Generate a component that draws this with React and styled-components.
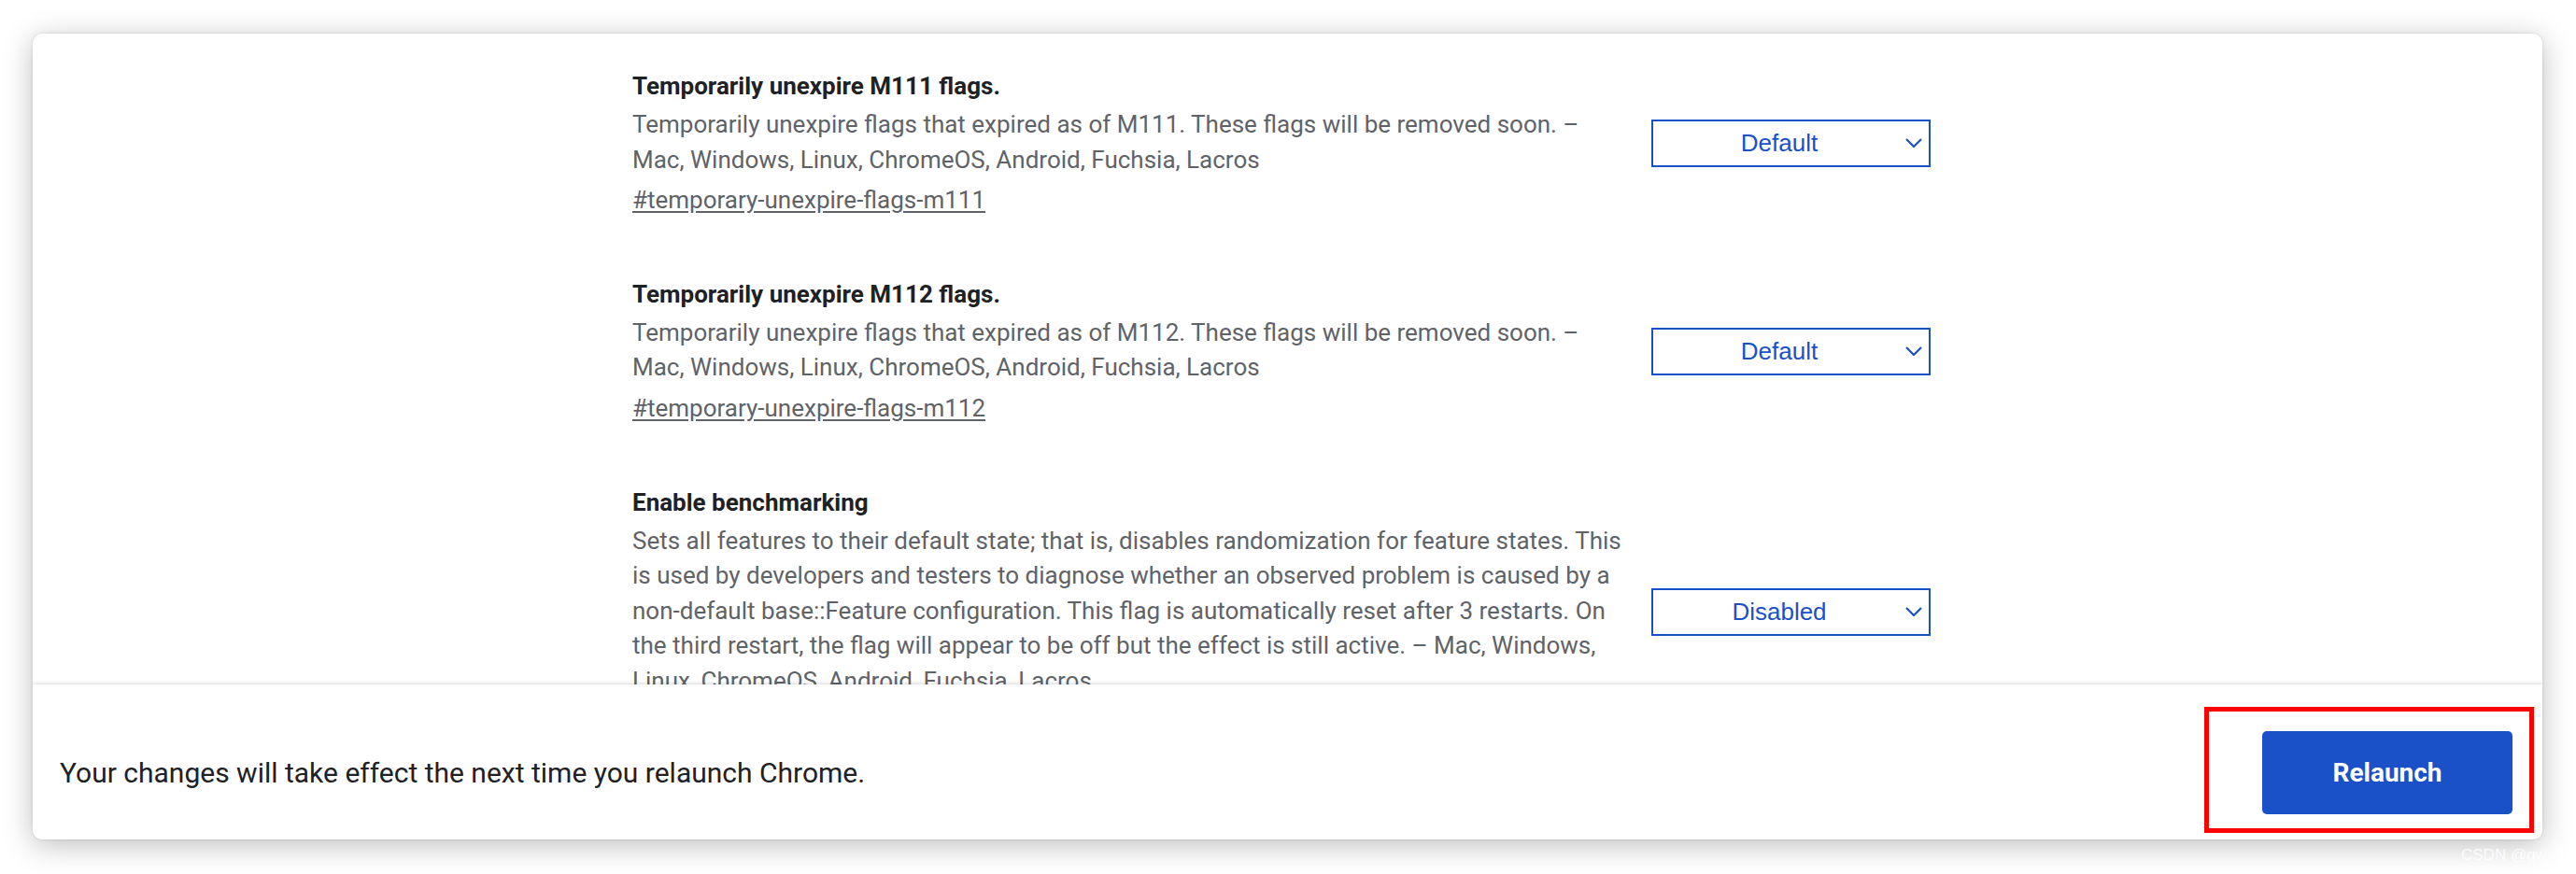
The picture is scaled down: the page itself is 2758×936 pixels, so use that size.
import React from 'react';
import styled, {createGlobalStyle} from 'styled-components';

const GlobalStyle = createGlobalStyle`
  html, body {
    margin: 0;
    padding: 0;
    background: #ffffff;
  }

  body {
    font-family: Roboto, "Noto Sans", "Liberation Sans", sans-serif;
    -webkit-font-smoothing: antialiased;
  }
`;

const flags = [
  {
    name: 'Temporarily unexpire M111 flags.',
    description:
      'Temporarily unexpire flags that expired as of M111. These flags will be removed soon. – Mac, Windows, Linux, ChromeOS, Android, Fuchsia, Lacros',
    link: '#temporary-unexpire-flags-m111',
    value: 'Default',
  },
  {
    name: 'Temporarily unexpire M112 flags.',
    description:
      'Temporarily unexpire flags that expired as of M112. These flags will be removed soon. – Mac, Windows, Linux, ChromeOS, Android, Fuchsia, Lacros',
    link: '#temporary-unexpire-flags-m112',
    value: 'Default',
  },
  {
    name: 'Enable benchmarking',
    description:
      'Sets all features to their default state; that is, disables randomization for feature states. This is used by developers and testers to diagnose whether an observed problem is caused by a non-default base::Feature configuration. This flag is automatically reset after 3 restarts. On the third restart, the flag will appear to be off but the effect is still active. – Mac, Windows, Linux, ChromeOS, Android, Fuchsia, Lacros',
    link: '#enable-benchmarking',
    value: 'Disabled',
  },
];

const Chevron = () => (
  <ChevronIcon viewBox="0 0 18 10" width="18" height="10">
    <path d="M1 1 L9 9 L17 1" fill="none" stroke="currentColor" strokeWidth="2.2" />
  </ChevronIcon>
);

const FlagRow = ({flag}) => (
  <Row>
    <TextColumn>
      <FlagName>{flag.name}</FlagName>
      <FlagDescription>{flag.description}</FlagDescription>
      <FlagLink href={flag.link}>{flag.link}</FlagLink>
    </TextColumn>
    <Select>
      <SelectLabel>{flag.value}</SelectLabel>
      <Chevron />
    </Select>
  </Row>
);

const App = () => (
  <Page>
    <GlobalStyle />
    <Card>
      <ScrollArea>
        <FlagList>
          {flags.map((flag) => (
            <FlagRow key={flag.link} flag={flag} />
          ))}
        </FlagList>
      </ScrollArea>
      <Footer>
        <RestartText>Your changes will take effect the next time you relaunch Chrome.</RestartText>
        <ButtonWrap>
          <RelaunchButton>Relaunch</RelaunchButton>
          <Highlight />
        </ButtonWrap>
      </Footer>
    </Card>
    <Watermark>CSDN @gw_shang</Watermark>
  </Page>
);

const Page = styled.div`
  position: relative;
  width: 2758px;
  height: 936px;
  box-sizing: border-box;
  padding: 36px 36px 37px 35px;
  overflow: hidden;
`;

const Card = styled.div`
  height: 100%;
  background: #ffffff;
  border-radius: 10px;
  box-shadow: 0 6px 32px rgba(0, 0, 0, 0.26), 0 0 3px rgba(0, 0, 0, 0.14);
  display: flex;
  flex-direction: column;
  overflow: hidden;
`;

const ScrollArea = styled.div`
  flex: 1;
  min-height: 0;
  overflow: hidden;
  padding: 37px 0 0 642px;
`;

const FlagList = styled.div`
  display: flex;
  flex-direction: column;
  gap: 62px;
`;

const Row = styled.div`
  display: flex;
  align-items: center;
`;

const TextColumn = styled.div`
  width: 1070px;
  display: flex;
  flex-direction: column;
  align-items: flex-start;
`;

const FlagName = styled.div`
  font-size: 26px;
  line-height: 38px;
  font-weight: 700;
  color: #202124;
  margin-bottom: 4px;
`;

const FlagDescription = styled.div`
  font-size: 26px;
  line-height: 37.6px;
  color: #5f6368;
`;

const FlagLink = styled.a`
  margin-top: 6px;
  font-size: 26px;
  line-height: 37.6px;
  color: #5f6368;
  text-decoration: underline;
  text-underline-offset: 3px;
`;

const Select = styled.div`
  margin-left: 21px;
  width: 299px;
  height: 51px;
  box-sizing: border-box;
  border: 2px solid #1a50c8;
  color: #1a50c8;
  display: flex;
  align-items: center;
  flex-shrink: 0;
`;

const SelectLabel = styled.span`
  flex: 1;
  text-align: center;
  font-family: "Liberation Sans", Arial, sans-serif;
  font-size: 26px;
`;

const ChevronIcon = styled.svg`
  margin-right: 7px;
  flex-shrink: 0;
`;

const Footer = styled.div`
  position: relative;
  z-index: 1;
  height: 166px;
  box-sizing: border-box;
  padding: 50px 32px 27px 29px;
  background: #ffffff;
  box-shadow: 0 -1px 4px rgba(0, 0, 0, 0.16);
  display: flex;
  align-items: center;
  justify-content: space-between;
`;

const RestartText = styled.div`
  font-size: 30px;
  color: #202124;
`;

const ButtonWrap = styled.div`
  position: relative;
`;

const RelaunchButton = styled.button`
  width: 268px;
  height: 89px;
  border: none;
  border-radius: 5px;
  background: #1a50c8;
  color: #ffffff;
  font-family: Roboto, "Liberation Sans", sans-serif;
  font-size: 28px;
  font-weight: 700;
  cursor: pointer;
`;

const Highlight = styled.div`
  position: absolute;
  left: -62px;
  right: -23px;
  top: -26px;
  bottom: -20px;
  border: 5px solid #ff0000;
  pointer-events: none;
`;

const Watermark = styled.div`
  position: absolute;
  left: 2635px;
  top: 906px;
  font-family: "Liberation Sans", Arial, sans-serif;
  font-size: 17px;
  color: rgba(255, 255, 255, 0.85);
  white-space: nowrap;
`;

export default App;
